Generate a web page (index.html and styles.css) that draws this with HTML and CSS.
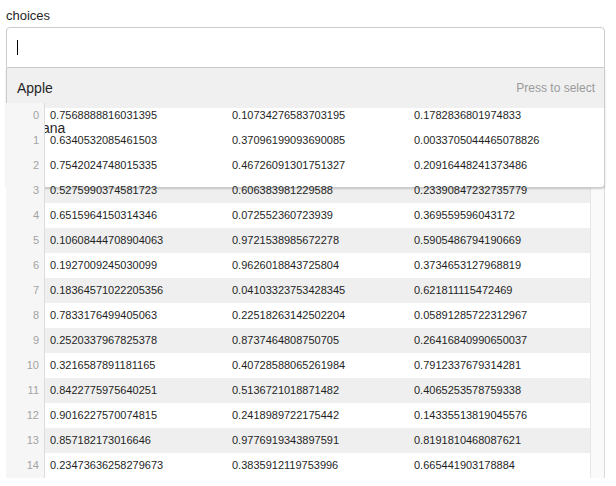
FILE: index.html
```html
<!DOCTYPE html>
<html lang="en">
<head>
<meta charset="UTF-8" />
<meta name="viewport" content="width=device-width, initial-scale=1.0"/>
<title>choices</title>
<link rel="stylesheet" href="styles.css">
</head>
<body>

<div class="page">
    <label class="field-label">choices</label>

    <div class="select">
        <div class="select-control">
            <span class="caret"></span>
        </div>
        <div class="select-menu">
            <div class="option active">
                <span>Apple</span>
                <span class="hint">Press to select</span>
            </div>
            <div class="option"><span>Banana</span></div>
        </div>
    </div>

    <div class="grid">
        <div class="grid-body" id="grid-body"></div>
        <div class="grid-scroll"></div>
    </div>
</div>

<script>
    const rows = [
        ['0.7568888816031395', '0.10734276583703195', '0.1782836801974833'],
        ['0.6340532085461503', '0.37096199093690085', '0.0033705044465078826'],
        ['0.7542024748015335', '0.46726091301751327', '0.20916448241373486'],
        ['0.5275990374581723', '0.606383981229588', '0.23390847232735779'],
        ['0.6515964150314346', '0.072552360723939', '0.369559596043172'],
        ['0.10608444708904063', '0.9721538985672278', '0.5905486794190669'],
        ['0.1927009245030099', '0.9626018843725804', '0.3734653127968819'],
        ['0.18364571022205356', '0.04103323753428345', '0.621811115472469'],
        ['0.7833176499405063', '0.22518263142502204', '0.05891285722312967'],
        ['0.2520337967825378', '0.8737464808750705', '0.26416840990650037'],
        ['0.3216587891181165', '0.40728588065261984', '0.7912337679314281'],
        ['0.8422775975640251', '0.5136721018871482', '0.4065253578759338'],
        ['0.9016227570074815', '0.2418989722175442', '0.14335513819045576'],
        ['0.857182173016646', '0.9776919343897591', '0.8191810468087621'],
        ['0.23473636258279673', '0.3835912119753996', '0.665441903178884']
    ];

    const body = document.getElementById('grid-body');

    rows.forEach((values, i) => {
        const row = document.createElement('div');
        row.classList.add('grid-row');
        if (i % 2 === 1) row.classList.add('odd');

        const index = document.createElement('div');
        index.classList.add('grid-index');
        index.textContent = i;
        row.appendChild(index);

        values.forEach(v => {
            const cell = document.createElement('div');
            cell.classList.add('grid-cell');
            const text = document.createElement('span');
            text.textContent = v;
            cell.appendChild(text);
            row.appendChild(cell);
        });

        body.appendChild(row);
    });
</script>

</body>
</html>
```

FILE: styles.css
```css
:root {
    --font-family: 'Liberation Sans', Arial, Helvetica, sans-serif;
    --text-color: #262626;
    --border-color: #cccccc;
    --grid-line: #dcdcdc;
    --row-alt: #efefef;
    --index-bg: #f6f6f6;
    --active-bg: #f0f0f0;
}

body {
    margin: 0;
    font-family: var(--font-family);
    color: var(--text-color);
    background: #fff;
}

.page {
    padding: 8px 11px 0 6px;
}

.field-label {
    display: block;
    font-size: 13px;
    line-height: 16px;
    margin-bottom: 3px;
}

/* select box with open menu */
.select {
    position: relative;
}

.select-control {
    display: flex;
    align-items: center;
    height: 39px;
    padding: 0 10px;
    border: 1px solid var(--border-color);
    border-radius: 4px 4px 0 0;
    background: #fff;
}

.caret {
    display: block;
    width: 1px;
    height: 15px;
    background: #000;
}

.select-menu {
    position: absolute;
    top: 100%;
    left: 0;
    right: 0;
    z-index: 1;
    height: 119px;
    background: #fff;
    border: 1px solid var(--border-color);
    border-top: none;
    border-radius: 0 0 4px 4px;
    box-shadow: 0 1px 2px rgba(0, 0, 0, 0.18);
}

.option {
    display: flex;
    align-items: center;
    justify-content: space-between;
    height: 40px;
    padding: 0 9px 0 10px;
    font-size: 14px;
}

.option.active {
    background: var(--active-bg);
}

.hint {
    font-size: 12px;
    color: #9a9a9a;
}

/* data grid */
.grid {
    display: flex;
    margin-top: 35px;
    position: relative;
}

.grid-body {
    flex: 1;
}

.grid-row {
    display: grid;
    grid-template-columns: 39px 182px 182px 1fr;
    height: 25px;
    font-size: 11px;
    line-height: 25px;
}

.grid-row.odd {
    background: var(--row-alt);
}

.grid-index {
    position: relative;
    z-index: 2;
    background: var(--index-bg);
    border-right: 1px solid var(--grid-line);
    text-align: right;
    padding-right: 5px;
    color: #a3a3a3;
}

.grid-cell {
    padding-left: 5px;
    white-space: nowrap;
    overflow: hidden;
}

.grid-cell span {
    position: relative;
    z-index: 2;
    color: #1f1f1f;
}

.grid-scroll {
    width: 13px;
    background: #fafafa;
    border-left: 1px solid #e6e6e6;
    border-right: 1px solid #dadada;
}
```
